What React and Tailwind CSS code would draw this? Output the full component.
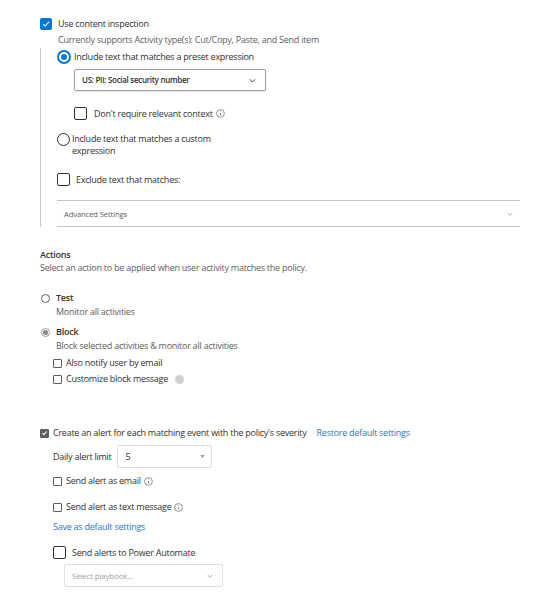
import React from 'react';

const Chevron = ({ className = '' }) => (
  <svg viewBox="0 0 12 12" className={className} fill="none" stroke="currentColor" strokeWidth="1.3">
    <path d="M2.5 4.5 6 8l3.5-3.5" />
  </svg>
);

const Info = ({ className = 'ml-[3px]' }) => (
  <svg viewBox="0 0 12 12" className={'h-[9px] w-[9px] text-[#605e5c] ' + className} fill="none" stroke="currentColor" strokeWidth="0.9">
    <circle cx="6" cy="6" r="5.2" />
    <path d="M6 5.2v3.6M6 3.2v0.9" />
  </svg>
);

function BigBox() {
  return <span className="inline-block h-[13px] w-[13px] shrink-0 rounded-[2px] border border-[#323130] bg-white" />;
}

function SmallBox({ checked }) {
  return (
    <span
      className={
        'flex h-[9px] w-[9px] shrink-0 items-center justify-center rounded-[1px] border ' +
        (checked ? 'border-[#605e5c] bg-[#605e5c]' : 'border-[#605e5c] bg-white')
      }
    >
      {checked && (
        <svg viewBox="0 0 10 10" className="h-[8px] w-[8px]" fill="none" stroke="white" strokeWidth="1.5">
          <path d="M2 5.2 4.2 7.3 8 2.8" />
        </svg>
      )}
    </span>
  );
}

function App() {
  return (
    <div
      className="relative h-[600px] w-[539px] overflow-hidden bg-white pt-[18px] text-[9px] leading-[12px] tracking-[-0.25px] text-[#323130]"
      style={{ fontFamily: '"Open Sans", "Noto Sans", sans-serif' }}
    >
      {/* content inspection */}
      <div className="ml-[40px] flex h-[12px] items-center">
        <span className="flex h-[12px] w-[12px] items-center justify-center rounded-[2px] bg-[#0078d4]">
          <svg viewBox="0 0 12 12" className="h-[10px] w-[10px]" fill="none" stroke="white" strokeWidth="1.3">
            <path d="M2.5 6.2 5 8.5l4.5-5" />
          </svg>
        </span>
        <span className="ml-[6px]">Use content inspection</span>
      </div>
      <div className="ml-[58px] mt-[4px] h-[12px] text-[#605e5c]">
        Currently supports Activity type(s): Cut/Copy, Paste, and Send item
      </div>

      <div className="ml-[40px] mt-[2px] w-[480px] border-l border-[#c8c6c4] pl-[16px] pt-[2px]">
        <div className="flex h-[14px] items-center">
          <span className="flex h-[14px] w-[14px] items-center justify-center rounded-full border-2 border-[#0078d4]">
            <span className="h-[6px] w-[6px] rounded-full bg-[#0078d4]" />
          </span>
          <span className="ml-[3px]">Include text that matches a preset expression</span>
        </div>
        <div className="ml-[17px] mt-[5px] flex h-[22px] w-[192px] items-center justify-between rounded-[2px] border border-[#a19f9d] pl-[7px] pr-[8px] shadow-[0_1px_2px_rgba(0,0,0,0.12)]">
          <span className="text-[8px] font-semibold tracking-[-0.3px]">US: PII: Social security number</span>
          <Chevron className="h-[9px] w-[9px] text-[#323130]" />
        </div>
        <div className="ml-[17px] mt-[16px] flex h-[13px] items-center">
          <BigBox />
          <span className="ml-[7px]">Don't require relevant context</span>
          <Info />
        </div>
        <div className="mt-[13px] flex items-start">
          <span className="h-[13px] w-[13px] shrink-0 rounded-full border border-[#323130]" />
          <span className="ml-[2px] w-[150px]">Include text that matches a custom expression</span>
        </div>
        <div className="mt-[16px] flex h-[13px] items-center">
          <BigBox />
          <span className="ml-[6px]">Exclude text that matches:</span>
        </div>
        <div className="mt-[14px] flex h-[27px] items-center justify-between border-y border-[#c8c6c4] pl-[7px] pr-[6px]">
          <span className="text-[7.6px] tracking-[-0.1px] text-[#605e5c]">Advanced Settings</span>
          <Chevron className="h-[8px] w-[8px] text-[#a19f9d]" />
        </div>
      </div>

      {/* actions */}
      <div className="ml-[40px] mt-[22px]">
        <div className="h-[12px] font-semibold">Actions</div>
        <div className="mt-[1px] h-[12px] text-[#605e5c]">
          Select an action to be applied when user activity matches the policy.
        </div>

        <div className="mt-[18px] flex h-[12px] items-center">
          <span className="ml-[1px] h-[9px] w-[9px] rounded-full border border-[#605e5c]" />
          <span className="ml-[6px] font-semibold">Test</span>
        </div>
        <div className="ml-[16px] mt-[2px] h-[12px] text-[#605e5c]">Monitor all activities</div>

        <div className="mt-[8px] flex h-[12px] items-center">
          <span className="ml-[1px] flex h-[9px] w-[9px] items-center justify-center rounded-full border border-[#a19f9d]">
            <span className="h-[5px] w-[5px] rounded-full bg-[#8a8886]" />
          </span>
          <span className="ml-[6px] font-semibold">Block</span>
        </div>
        <div className="ml-[16px] mt-[2px] h-[12px] text-[#605e5c]">
          Block selected activities &amp; monitor all activities
        </div>
        <div className="ml-[13px] mt-[5px] flex h-[12px] items-center">
          <SmallBox />
          <span className="ml-[4px]">Also notify user by email</span>
        </div>
        <div className="ml-[13px] mt-[4px] flex h-[12px] items-center">
          <SmallBox />
          <span className="ml-[4px]">Customize block message</span>
          <span className="ml-[7px] h-[9px] w-[9px] rounded-full bg-[#d2d0ce]" />
        </div>
      </div>

      {/* alerts */}
      <div className="ml-[40px] mt-[42px]">
        <div className="flex h-[12px] items-center">
          <SmallBox checked />
          <span className="ml-[4px]">Create an alert for each matching event with the policy's severity</span>
          <span className="ml-[10px] text-[#2b78c8]">Restore default settings</span>
        </div>
        <div className="ml-[13px] mt-[6px] flex h-[23px] items-center">
          <span>Daily alert limit</span>
          <div className="ml-[5px] flex h-[23px] w-[95px] items-center justify-between rounded-[2px] border border-[#e1dfdd] pl-[8px] pr-[6px]">
            <span>5</span>
            <svg viewBox="0 0 6 4" className="h-[3px] w-[5px] text-[#a19f9d]" fill="currentColor">
              <path d="M0 0h6L3 4z" />
            </svg>
          </div>
        </div>
        <div className="ml-[13px] mt-[7px] flex h-[12px] items-center">
          <SmallBox />
          <span className="ml-[4px]">Send alert as email</span>
          <Info />
        </div>
        <div className="ml-[13px] mt-[14px] flex h-[12px] items-center">
          <SmallBox />
          <span className="ml-[4px]">Send alert as text message</span>
          <Info />
        </div>
        <div className="ml-[13px] mt-[8px] h-[12px] text-[#2b78c8]">Save as default settings</div>
        <div className="ml-[13px] mt-[13px] flex h-[13px] items-center">
          <BigBox />
          <span className="ml-[6px]">Send alerts to Power Automate</span>
        </div>
        <div className="ml-[24px] mt-[5px] flex h-[23px] w-[159px] items-center justify-between rounded-[2px] border border-[#e1dfdd] pl-[7px] pr-[8px]">
          <span className="text-[8px] tracking-[-0.2px] text-[#a19f9d]">Select playbook...</span>
          <Chevron className="h-[8px] w-[8px] text-[#a19f9d]" />
        </div>
      </div>
    </div>
  );
}

export default App;
